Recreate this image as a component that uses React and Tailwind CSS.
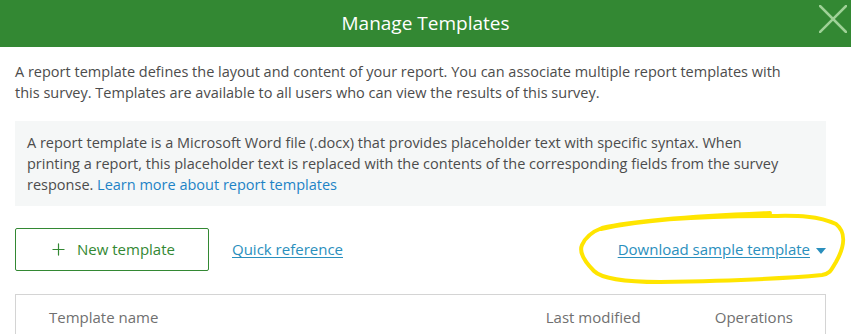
import { Plus } from 'lucide-react';

function CloseIcon() {
  return (
    <svg width="28" height="28" viewBox="0 0 28 28" fill="none">
      <path d="M1 1 L27 27 M27 1 L1 27" stroke="#9fd197" strokeWidth="2.5" strokeLinecap="square" />
    </svg>
  );
}

function Scribble() {
  // yellow hand-drawn highlight around the download link
  return (
    <svg className="pointer-events-none absolute left-0 top-0" width="851" height="334" viewBox="0 0 851 334" fill="none">
      <path
        d="M601 229 C 640 220, 700 216, 768 216 C 790 216, 815 214, 836 224 C 846 232, 845 246, 836 262 C 831 270, 830 274, 822 275 C 780 279, 720 281, 660 282 C 630 282, 603 280, 594 271 C 585 262, 579 252, 582 245 C 586 236, 594 231, 602 228 C 640 219, 720 215, 770 213"
        stroke="#ffe500"
        strokeWidth="4"
        strokeLinecap="round"
        strokeLinejoin="round"
      />
    </svg>
  );
}

export default function App() {
  return (
    <div className="relative h-[334px] w-[851px] overflow-hidden bg-white font-['Open_Sans','Noto_Sans',sans-serif] text-[#4c4c4c]">
      <header className="relative flex h-[47px] items-center justify-center bg-[#338833]">
        <h1 className="text-[19px] font-normal text-white">Manage Templates</h1>
        <button className="absolute right-[4px] top-[5px]" title="Close">
          <CloseIcon />
        </button>
      </header>

      <div className="pl-[15px] pr-[25px] pt-[14px]">
        <p className="text-[14.5px] leading-[21px]">
          A report template defines the layout and content of your report. You can associate multiple report templates with
          <br />
          this survey. Templates are available to all users who can view the results of this survey.
        </p>

        <div className="mt-[18px] bg-[#f5f7f7] px-[12px] py-[11px] text-[14.5px] leading-[21px]">
          A report template is a Microsoft Word file (.docx) that provides placeholder text with specific syntax. When
          <br />
          printing a report, this placeholder text is replaced with the contents of the corresponding fields from the survey
          <br />
          response. <a className="text-[#1d83c6]">Learn more about report templates</a>
        </div>

        <div className="mt-[22px] flex items-center">
          <button className="flex h-[43px] w-[194px] items-center justify-center gap-[9px] rounded-[2px] border border-[#338833] text-[15px] text-[#338833]">
            <Plus className="h-[19px] w-[19px]" strokeWidth={1.5} />
            New template
          </button>
          <a className="ml-[23px] text-[15px] text-[#2a8fbd] underline underline-offset-2">Quick reference</a>
          <a className="ml-auto flex items-center gap-[6px] text-[15px] text-[#2a8fbd]">
            <span className="underline underline-offset-2">Download sample template</span>
            <svg width="10" height="6" viewBox="0 0 10 6" className="mt-[3px]">
              <path d="M0 0 H10 L5 6 Z" fill="#2a8fbd" />
            </svg>
          </a>
        </div>

        <div className="mt-[23px] border border-[#d4d4d4]">
          <div className="flex h-[44px] items-center pl-[33px] pr-[32px] text-[15px] font-medium text-[#707070]">
            <span className="flex-1">Template name</span>
            <span className="w-[169px]">Last modified</span>
            <span>Operations</span>
          </div>
        </div>
      </div>

      <Scribble />
    </div>
  );
}
